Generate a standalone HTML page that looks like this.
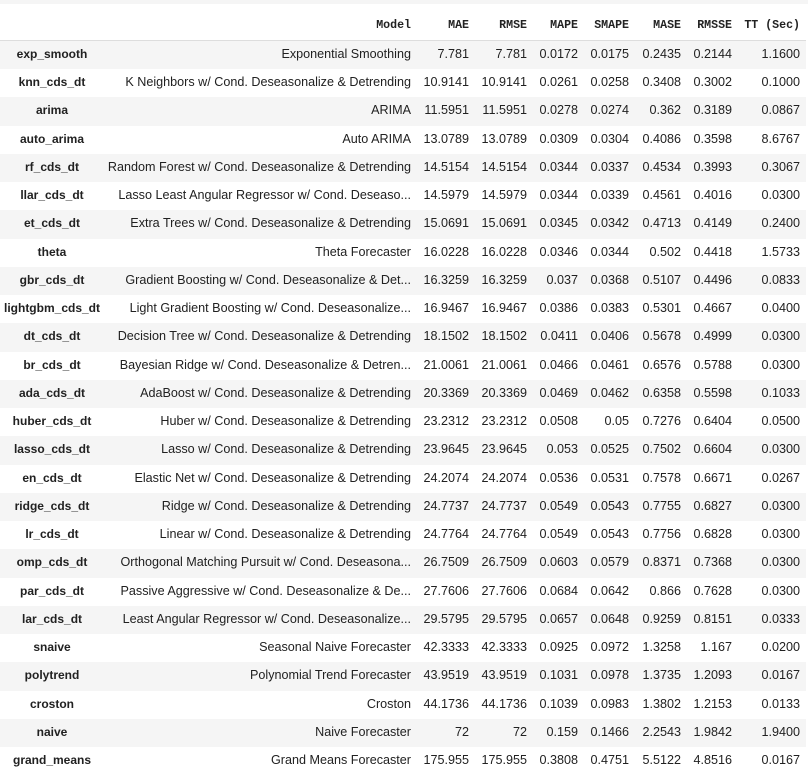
<!DOCTYPE html>
<html><head><meta charset="utf-8"><style>
body{margin:0;width:808px;height:773px;background:#fff;overflow:hidden;font-family:"Liberation Sans",Arial,sans-serif;font-size:12.6px;color:#212121;position:relative}
.top{position:absolute;left:0;top:0;width:808px;height:4px;background:#f5f5f5}
.hdr{position:absolute;top:0;left:0;width:806px;height:40px;border-bottom:1px solid #ddd}
.h{position:absolute;top:19px;font-family:"Liberation Mono",monospace;font-size:11.6px;font-weight:bold;color:#222;text-align:right;white-space:nowrap}
.r{position:absolute;left:0;width:806px;height:28.24px}
.r.g{background:#f5f5f5}
.c{position:absolute;top:6px;text-align:right;white-space:nowrap}
.i{position:absolute;top:6px;left:0;width:104px;text-align:center;font-weight:bold;font-size:12px;white-space:nowrap}
</style></head><body>
<div class="top"></div>
<div class="hdr">
<div class="h" style="right:395px">Model</div>
<div class="h" style="right:337px">MAE</div>
<div class="h" style="right:279px">RMSE</div>
<div class="h" style="right:228px">MAPE</div>
<div class="h" style="right:177px">SMAPE</div>
<div class="h" style="right:125px">MASE</div>
<div class="h" style="right:74px">RMSSE</div>
<div class="h" style="right:6px">TT (Sec)</div>
</div>
<div id="t"></div>
<script>
var d=[
["exp_smooth","Exponential Smoothing","7.781","7.781","0.0172","0.0175","0.2435","0.2144","1.1600"],
["knn_cds_dt","K Neighbors w/ Cond. Deseasonalize & Detrending","10.9141","10.9141","0.0261","0.0258","0.3408","0.3002","0.1000"],
["arima","ARIMA","11.5951","11.5951","0.0278","0.0274","0.362","0.3189","0.0867"],
["auto_arima","Auto ARIMA","13.0789","13.0789","0.0309","0.0304","0.4086","0.3598","8.6767"],
["rf_cds_dt","Random Forest w/ Cond. Deseasonalize & Detrending","14.5154","14.5154","0.0344","0.0337","0.4534","0.3993","0.3067"],
["llar_cds_dt","Lasso Least Angular Regressor w/ Cond. Deseaso...","14.5979","14.5979","0.0344","0.0339","0.4561","0.4016","0.0300"],
["et_cds_dt","Extra Trees w/ Cond. Deseasonalize & Detrending","15.0691","15.0691","0.0345","0.0342","0.4713","0.4149","0.2400"],
["theta","Theta Forecaster","16.0228","16.0228","0.0346","0.0344","0.502","0.4418","1.5733"],
["gbr_cds_dt","Gradient Boosting w/ Cond. Deseasonalize & Det...","16.3259","16.3259","0.037","0.0368","0.5107","0.4496","0.0833"],
["lightgbm_cds_dt","Light Gradient Boosting w/ Cond. Deseasonalize...","16.9467","16.9467","0.0386","0.0383","0.5301","0.4667","0.0400"],
["dt_cds_dt","Decision Tree w/ Cond. Deseasonalize & Detrending","18.1502","18.1502","0.0411","0.0406","0.5678","0.4999","0.0300"],
["br_cds_dt","Bayesian Ridge w/ Cond. Deseasonalize & Detren...","21.0061","21.0061","0.0466","0.0461","0.6576","0.5788","0.0300"],
["ada_cds_dt","AdaBoost w/ Cond. Deseasonalize & Detrending","20.3369","20.3369","0.0469","0.0462","0.6358","0.5598","0.1033"],
["huber_cds_dt","Huber w/ Cond. Deseasonalize & Detrending","23.2312","23.2312","0.0508","0.05","0.7276","0.6404","0.0500"],
["lasso_cds_dt","Lasso w/ Cond. Deseasonalize & Detrending","23.9645","23.9645","0.053","0.0525","0.7502","0.6604","0.0300"],
["en_cds_dt","Elastic Net w/ Cond. Deseasonalize & Detrending","24.2074","24.2074","0.0536","0.0531","0.7578","0.6671","0.0267"],
["ridge_cds_dt","Ridge w/ Cond. Deseasonalize & Detrending","24.7737","24.7737","0.0549","0.0543","0.7755","0.6827","0.0300"],
["lr_cds_dt","Linear w/ Cond. Deseasonalize & Detrending","24.7764","24.7764","0.0549","0.0543","0.7756","0.6828","0.0300"],
["omp_cds_dt","Orthogonal Matching Pursuit w/ Cond. Deseasona...","26.7509","26.7509","0.0603","0.0579","0.8371","0.7368","0.0300"],
["par_cds_dt","Passive Aggressive w/ Cond. Deseasonalize & De...","27.7606","27.7606","0.0684","0.0642","0.866","0.7628","0.0300"],
["lar_cds_dt","Least Angular Regressor w/ Cond. Deseasonalize...","29.5795","29.5795","0.0657","0.0648","0.9259","0.8151","0.0333"],
["snaive","Seasonal Naive Forecaster","42.3333","42.3333","0.0925","0.0972","1.3258","1.167","0.0200"],
["polytrend","Polynomial Trend Forecaster","43.9519","43.9519","0.1031","0.0978","1.3735","1.2093","0.0167"],
["croston","Croston","44.1736","44.1736","0.1039","0.0983","1.3802","1.2153","0.0133"],
["naive","Naive Forecaster","72","72","0.159","0.1466","2.2543","1.9842","1.9400"],
["grand_means","Grand Means Forecaster","175.955","175.955","0.3808","0.4751","5.5122","4.8516","0.0167"]];
var R=[395,337,279,228,177,125,74,6],h="";
d.forEach(function(r,k){h+='<div class="r'+(k%2==0?' g':'')+'" style="top:'+(41+k*28.24)+'px"><div class="i">'+r[0]+'</div>';
for(var j=1;j<9;j++)h+='<div class="c" style="right:'+R[j-1]+'px">'+r[j].replace(/&/g,'&amp;')+'</div>';h+='</div>';});
document.getElementById('t').innerHTML=h;
</script>
</body></html>
